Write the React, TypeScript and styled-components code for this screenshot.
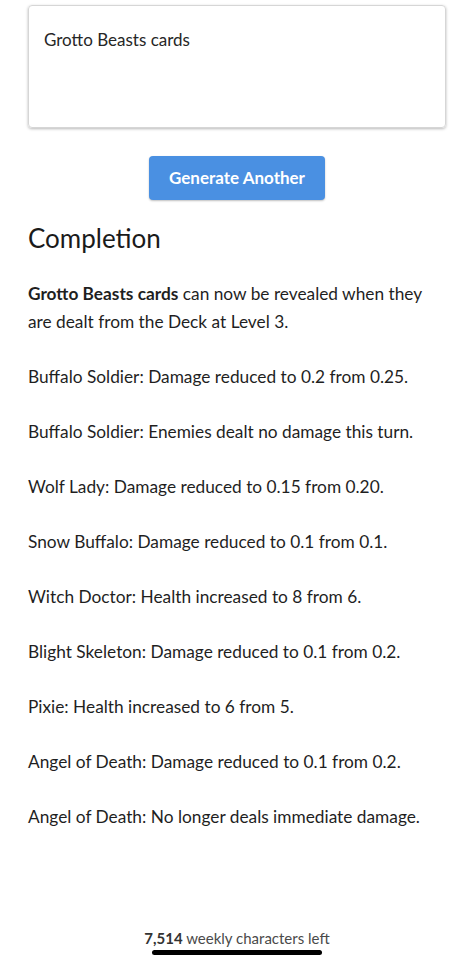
import React from 'react';
import styled, { createGlobalStyle } from 'styled-components';

const Global = createGlobalStyle`
  html, body {
    margin: 0;
    padding: 0;
    background: #fff;
  }
  body {
    font-family: Lato, "Noto Sans", sans-serif;
    color: #1f1f1f;
  }
`;

const Page = styled.div`
  height: 965px;
  box-sizing: border-box;
  display: flex;
  flex-direction: column;
  padding: 5px 28px 10px;
`;

const PromptBox = styled.div`
  height: 123px;
  box-sizing: border-box;
  padding: 23px 15px;
  border: 1px solid #d6d6d6;
  border-radius: 4px;
  box-shadow: 0 1px 3px rgba(0, 0, 0, 0.28);
  font-size: 17px;
  line-height: 22px;
  color: #262626;
`;

const ButtonRow = styled.div`
  display: flex;
  justify-content: center;
  margin-top: 28px;
`;

const Button = styled.button`
  width: 176px;
  height: 44px;
  padding: 0 0 2px;
  border: none;
  border-radius: 4px;
  background: #4a90e2;
  color: #fff;
  font-family: Lato, sans-serif;
  font-size: 17px;
  font-weight: 700;
  box-shadow: 0 1px 2px rgba(0, 0, 0, 0.25);
`;

const Heading = styled.h2`
  margin: 22px 0 26px;
  font-size: 26px;
  line-height: 32px;
  font-weight: 400;
  color: #1a1a1a;
`;

const Para = styled.p`
  margin: 0 0 27px;
  font-size: 17.3px;
  line-height: 28px;
  color: #1f1f1f;
  b {
    font-weight: 700;
  }
`;

const Footer = styled.div`
  margin-top: auto;
  display: flex;
  flex-direction: column;
  align-items: center;
`;

const Quota = styled.div`
  font-size: 15px;
  line-height: 20px;
  color: #4a4a4a;
  b {
    color: #333;
  }
`;

const HomeBar = styled.div`
  width: 170px;
  height: 5px;
  margin-top: 2px;
  border-radius: 3px;
  background: #000;
`;

const lines = [
  'Buffalo Soldier: Damage reduced to 0.2 from 0.25.',
  'Buffalo Soldier: Enemies dealt no damage this turn.',
  'Wolf Lady: Damage reduced to 0.15 from 0.20.',
  'Snow Buffalo: Damage reduced to 0.1 from 0.1.',
  'Witch Doctor: Health increased to 8 from 6.',
  'Blight Skeleton: Damage reduced to 0.1 from 0.2.',
  'Pixie: Health increased to 6 from 5.',
  'Angel of Death: Damage reduced to 0.1 from 0.2.',
  'Angel of Death: No longer deals immediate damage.',
];

const App = () => {
  return (
    <>
      <Global />
      <Page>
        <PromptBox>Grotto Beasts cards</PromptBox>
        <ButtonRow>
          <Button>Generate Another</Button>
        </ButtonRow>
        <Heading>Completion</Heading>
        <Para>
          <b>Grotto Beasts cards</b> can now be revealed when they are dealt from the Deck at Level 3.
        </Para>
        {lines.map((l, i) => (
          <Para key={i}>{l}</Para>
        ))}
        <Footer>
          <Quota>
            <b>7,514</b> weekly characters left
          </Quota>
          <HomeBar />
        </Footer>
      </Page>
    </>
  );
};

export default App;
